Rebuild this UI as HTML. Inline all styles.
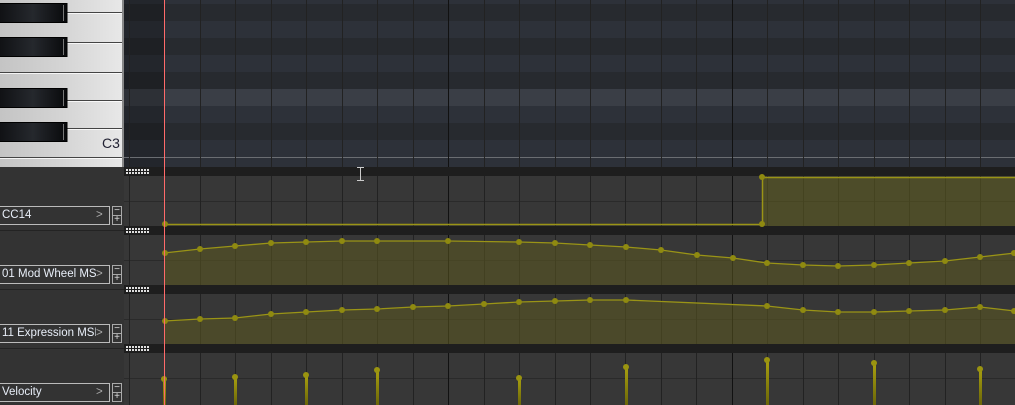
<!DOCTYPE html>
<html><head><meta charset="utf-8"><style>
body{margin:0;width:1015px;height:405px;overflow:hidden;background:#333;font-family:"Liberation Sans",sans-serif}
.lbl{position:absolute;left:-2px;width:112px;height:19px;border:1px solid #bbb;box-sizing:border-box;color:#e8eef8;font-size:11.5px;line-height:17px;padding-left:3px;white-space:nowrap;overflow:hidden}
.lbl span{position:absolute;right:0;top:0;width:13px;color:#aaa;background:#333}
.pm{position:absolute;left:112px;width:10px;height:10px;border:1px solid #aaa;box-sizing:border-box;color:#ddd;font-size:10px;line-height:7px;text-align:center}
</style></head><body>
<svg width="1015" height="405" style="position:absolute;left:0;top:0" xmlns="http://www.w3.org/2000/svg">
<defs>
<linearGradient id="wk" x1="0" y1="0" x2="1" y2="0"><stop offset="0" stop-color="#c4c4c4"/><stop offset="0.5" stop-color="#d4d4d4"/><stop offset="1" stop-color="#e8e8e8"/></linearGradient>
<linearGradient id="bk" x1="0" y1="0" x2="1" y2="0"><stop offset="0" stop-color="#101114"/><stop offset="0.5" stop-color="#25282d"/><stop offset="1" stop-color="#08090b"/></linearGradient>
<linearGradient id="vg" x1="0" y1="0" x2="0" y2="1"><stop offset="0" stop-color="#a8a010"/><stop offset="1" stop-color="#6b6608"/></linearGradient>
</defs>
<rect x="0" y="0" width="123" height="167" fill="url(#wk)"/>
<g stroke="#444" stroke-width="1">
<line x1="0" y1="12.5" x2="123" y2="12.5"/><line x1="0" y1="42.5" x2="123" y2="42.5"/><line x1="0" y1="72.5" x2="123" y2="72.5"/><line x1="0" y1="100.5" x2="123" y2="100.5"/><line x1="0" y1="128.5" x2="123" y2="128.5"/><line x1="0" y1="157.5" x2="123" y2="157.5"/>
</g>
<g stroke="#fff" stroke-width="1" opacity="0.8">
<line x1="0" y1="13.5" x2="123" y2="13.5"/><line x1="0" y1="43.5" x2="123" y2="43.5"/><line x1="0" y1="73.5" x2="123" y2="73.5"/><line x1="0" y1="101.5" x2="123" y2="101.5"/><line x1="0" y1="129.5" x2="123" y2="129.5"/><line x1="0" y1="158.5" x2="123" y2="158.5"/>
</g>
<g fill="url(#bk)" stroke="#000">
<rect x="-1" y="3.5" width="68" height="19"/><rect x="-1" y="37.5" width="68" height="19"/><rect x="-1" y="88.5" width="68" height="19"/><rect x="-1" y="122.5" width="68" height="19"/>
</g>
<g stroke="#777" fill="none"><path d="M63.5 5v16M63.5 39v16M63.5 90v16M63.5 124v16"/></g>
<text x="102" y="148" font-size="14" fill="#223" font-family="Liberation Sans">C3</text>
<rect x="122" y="0" width="2" height="167" fill="#888"/>
<rect x="124" y="0" width="891" height="167" fill="#2d3139"/>
<g fill="#272a2f">
<rect x="124" y="4" width="891" height="17"/><rect x="124" y="38" width="891" height="17"/><rect x="124" y="72" width="891" height="17"/><rect x="124" y="123" width="891" height="17"/>
</g>
<rect x="124" y="89" width="891" height="17" fill="#3a3e46"/>
<rect x="124" y="0" width="40" height="167" fill="#000" opacity="0.22"/>
<line x1="124" y1="157.5" x2="1015" y2="157.5" stroke="#6a6d72"/>
<rect x="0" y="167" width="1015" height="238" fill="#333"/>
<g fill="#373737">
<rect x="124" y="176" width="891" height="50"/><rect x="124" y="235" width="891" height="50"/><rect x="124" y="294" width="891" height="50"/><rect x="124" y="353" width="891" height="52"/>
</g>
<g stroke="#2a2a2a"><line x1="124" y1="201.5" x2="1015" y2="201.5"/><line x1="124" y1="260.5" x2="1015" y2="260.5"/><line x1="124" y1="319.5" x2="1015" y2="319.5"/><line x1="124" y1="378.5" x2="1015" y2="378.5"/></g>
<g stroke="#232323"><line x1="0" y1="230.5" x2="124" y2="230.5"/><line x1="0" y1="289.5" x2="124" y2="289.5"/><line x1="0" y1="348.5" x2="124" y2="348.5"/></g>
<g stroke="#222" stroke-width="1">
<line x1="129.5" y1="0" x2="129.5" y2="405"/><line x1="200.5" y1="0" x2="200.5" y2="405"/><line x1="235.5" y1="0" x2="235.5" y2="405"/><line x1="271.5" y1="0" x2="271.5" y2="405"/><line x1="306.5" y1="0" x2="306.5" y2="405"/><line x1="342.5" y1="0" x2="342.5" y2="405"/><line x1="377.5" y1="0" x2="377.5" y2="405"/><line x1="413.5" y1="0" x2="413.5" y2="405"/><line x1="484.5" y1="0" x2="484.5" y2="405"/><line x1="519.5" y1="0" x2="519.5" y2="405"/><line x1="555.5" y1="0" x2="555.5" y2="405"/><line x1="590.5" y1="0" x2="590.5" y2="405"/><line x1="625.5" y1="0" x2="625.5" y2="405"/><line x1="661.5" y1="0" x2="661.5" y2="405"/><line x1="696.5" y1="0" x2="696.5" y2="405"/><line x1="767.5" y1="0" x2="767.5" y2="405"/><line x1="803.5" y1="0" x2="803.5" y2="405"/><line x1="838.5" y1="0" x2="838.5" y2="405"/><line x1="874.5" y1="0" x2="874.5" y2="405"/><line x1="909.5" y1="0" x2="909.5" y2="405"/><line x1="945.5" y1="0" x2="945.5" y2="405"/><line x1="980.5" y1="0" x2="980.5" y2="405"/>
</g>
<g stroke="#111"><line x1="448.5" y1="0" x2="448.5" y2="405"/><line x1="732.5" y1="0" x2="732.5" y2="405"/></g>
<g fill="#1e1e1e"><rect x="124" y="167" width="891" height="9"/><rect x="124" y="226" width="891" height="9"/><rect x="124" y="285" width="891" height="9"/><rect x="124" y="344" width="891" height="9"/></g>
<g id="grip" fill="#e0e0e0">
<path d="M126 169h2v2h-2zM129 169h2v2h-2zM132 169h2v2h-2zM135 169h2v2h-2zM138 169h2v2h-2zM141 169h2v2h-2zM144 169h2v2h-2zM147 169h2v2h-2zM126 172h2v2h-2zM129 172h2v2h-2zM132 172h2v2h-2zM135 172h2v2h-2zM138 172h2v2h-2zM141 172h2v2h-2zM144 172h2v2h-2zM147 172h2v2h-2z"/>
</g>
<use href="#grip" y="59"/><use href="#grip" y="118"/><use href="#grip" y="177"/>
<rect x="762" y="177" width="253" height="49" fill="#5c5a20" opacity="0.6"/>
<path d="M164 224.5H762.5V177.5H1015" fill="none" stroke="#9a9416" stroke-width="1.5"/>
<g fill="#8f8a10"><circle cx="165" cy="224" r="3"/><circle cx="762" cy="224" r="3"/><circle cx="762" cy="177" r="3"/></g>
<path d="M164 253L200 249L235 246L271 243L306 242L342 241L377 241L448 241L519 242L555 243L590 245L626 247L661 250L697 255L733 258L767 263L803 265L838 266L874 265L909 263L945 261L980 257L1015 253V285H164Z" fill="#5c5a20" opacity="0.55"/>
<path d="M164 253L200 249L235 246L271 243L306 242L342 241L377 241L448 241L519 242L555 243L590 245L626 247L661 250L697 255L733 258L767 263L803 265L838 266L874 265L909 263L945 261L980 257L1015 253" fill="none" stroke="#9a9416" stroke-width="1.3"/>
<g fill="#8f8a10"><circle cx="165" cy="253" r="3"/><circle cx="200" cy="249" r="3"/><circle cx="235" cy="246" r="3"/><circle cx="271" cy="243" r="3"/><circle cx="306" cy="242" r="3"/><circle cx="342" cy="241" r="3"/><circle cx="377" cy="241" r="3"/><circle cx="448" cy="241" r="3"/><circle cx="519" cy="242" r="3"/><circle cx="555" cy="243" r="3"/><circle cx="590" cy="245" r="3"/><circle cx="626" cy="247" r="3"/><circle cx="661" cy="250" r="3"/><circle cx="697" cy="255" r="3"/><circle cx="733" cy="258" r="3"/><circle cx="767" cy="263" r="3"/><circle cx="803" cy="265" r="3"/><circle cx="838" cy="266" r="3"/><circle cx="874" cy="265" r="3"/><circle cx="909" cy="263" r="3"/><circle cx="945" cy="261" r="3"/><circle cx="980" cy="257" r="3"/><circle cx="1014" cy="253" r="3"/></g>
<path d="M164 321L200 319L235 318L271 314L306 312L342 310L377 309L413 307L448 306L484 304L519 302L555 301L590 300L626 300L767 306L803 310L838 312L874 312L909 311L945 310L980 307L1015 311V344H164Z" fill="#5c5a20" opacity="0.55"/>
<path d="M164 321L200 319L235 318L271 314L306 312L342 310L377 309L413 307L448 306L484 304L519 302L555 301L590 300L626 300L767 306L803 310L838 312L874 312L909 311L945 310L980 307L1015 311" fill="none" stroke="#9a9416" stroke-width="1.3"/>
<g fill="#8f8a10"><circle cx="165" cy="321" r="3"/><circle cx="200" cy="319" r="3"/><circle cx="235" cy="318" r="3"/><circle cx="271" cy="314" r="3"/><circle cx="306" cy="312" r="3"/><circle cx="342" cy="310" r="3"/><circle cx="377" cy="309" r="3"/><circle cx="413" cy="307" r="3"/><circle cx="448" cy="306" r="3"/><circle cx="484" cy="304" r="3"/><circle cx="519" cy="302" r="3"/><circle cx="555" cy="301" r="3"/><circle cx="590" cy="300" r="3"/><circle cx="626" cy="300" r="3"/><circle cx="767" cy="306" r="3"/><circle cx="803" cy="310" r="3"/><circle cx="838" cy="312" r="3"/><circle cx="874" cy="312" r="3"/><circle cx="909" cy="311" r="3"/><circle cx="945" cy="310" r="3"/><circle cx="980" cy="307" r="3"/><circle cx="1014" cy="311" r="3"/></g>
<g fill="url(#vg)"><rect x="163" y="379" width="3" height="26"/><rect x="234" y="377" width="3" height="28"/><rect x="305" y="375" width="3" height="30"/><rect x="376" y="370" width="3" height="35"/><rect x="518" y="378" width="3" height="27"/><rect x="625" y="367" width="3" height="38"/><rect x="766" y="360" width="3" height="45"/><rect x="873" y="363" width="3" height="42"/><rect x="979" y="369" width="3" height="36"/></g>
<g fill="#9a9410"><circle cx="164" cy="379" r="3"/><circle cx="235" cy="377" r="3"/><circle cx="306" cy="375" r="3"/><circle cx="377" cy="370" r="3"/><circle cx="519" cy="378" r="3"/><circle cx="626" cy="367" r="3"/><circle cx="767" cy="360" r="3"/><circle cx="874" cy="363" r="3"/><circle cx="980" cy="369" r="3"/></g>
<rect x="164" y="0" width="1" height="405" fill="#ff6a6a"/>
<path d="M360.5 167v14M357 167.5h7M357 180.5h7" stroke="#ccc" fill="none"/>
</svg>
<div class="lbl" style="top:206px">CC14<span>&gt;</span></div>
<div class="pm" style="top:206px">−</div><div class="pm" style="top:215px">+</div>
<div class="lbl" style="top:265px">01 Mod Wheel MSE<span>&gt;</span></div>
<div class="pm" style="top:265px">−</div><div class="pm" style="top:274px">+</div>
<div class="lbl" style="top:324px">11 Expression MSE<span>&gt;</span></div>
<div class="pm" style="top:324px">−</div><div class="pm" style="top:333px">+</div>
<div class="lbl" style="top:383px">Velocity<span>&gt;</span></div>
<div class="pm" style="top:383px">−</div><div class="pm" style="top:392px">+</div>
</body></html>
